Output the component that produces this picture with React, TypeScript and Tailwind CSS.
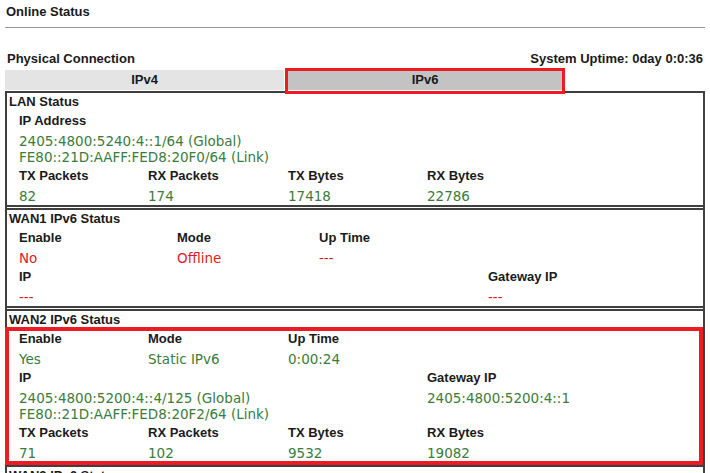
import React from "react"

const LABEL = "h-[20px] font-bold text-[13px] leading-[20px] text-[#1a1a1a]"
const VAL = "pt-[2px] pb-[1px] text-[13.5px] leading-[16px] font-['Verdana','DejaVu_Sans',sans-serif]"
const GREEN = "text-[#3b7b3b]"
const RED = "text-[#dd1c24]"

function Cell({ label, children, tone = GREEN }: { label?: string; children?: React.ReactNode; tone?: string }) {
  return (
    <div>
      {label ? <div className={LABEL}>{label}</div> : null}
      {children !== undefined ? <div className={`${VAL} ${tone}`}>{children}</div> : null}
    </div>
  )
}

function SectionTitle({ children }: { children: React.ReactNode }) {
  return <div className="pl-[2px] font-bold text-[13px] leading-[18px] text-[#1a1a1a]">{children}</div>
}

function Counters({ tx, rx, txb, rxb }: { tx: string; rx: string; txb: string; rxb: string }) {
  return (
    <div className="grid grid-cols-[129px_140px_139px_1fr]">
      <div className={LABEL}>TX Packets</div>
      <div className={LABEL}>RX Packets</div>
      <div className={LABEL}>TX Bytes</div>
      <div className={LABEL}>RX Bytes</div>
      <div className={`${VAL} ${GREEN}`}>{tx}</div>
      <div className={`${VAL} ${GREEN}`}>{rx}</div>
      <div className={`${VAL} ${GREEN}`}>{txb}</div>
      <div className={`${VAL} ${GREEN}`}>{rxb}</div>
    </div>
  )
}

export default function App() {
  return (
    <div className="w-[710px] bg-white px-[5px] font-['Liberation_Sans',Arial,sans-serif] text-[#1a1a1a]">
      <div className="h-[28px] border-b border-[#9a9a9a] pt-[4px] pl-[1px] font-bold text-[13px] leading-[16px]">
        Online Status
      </div>

      <div className="mt-[23px] flex h-[16px] items-center justify-between px-[2px] font-bold text-[13px] leading-[16px]">
        <span>Physical Connection</span>
        <span>System Uptime: 0day 0:0:36</span>
      </div>

      <div className="mt-[3px] flex gap-[3px]">
        <div className="flex h-[20px] w-[279px] items-center justify-center bg-[#e4e4e4] font-bold text-[13px]">IPv4</div>
        <div className="relative flex h-[20px] w-[276px] items-center justify-center bg-[#c3c3c3] font-bold text-[13px]">
          IPv6
          <div className="absolute -left-[2px] -right-[2px] -top-[2px] -bottom-[4px] border-[3px] border-[#ed1c24]" />
        </div>
      </div>

      <div className="mt-[1px] border-x-2 border-[#3f3f3f]">
        <section className="border-y-2 border-[#3f3f3f]">
          <SectionTitle>LAN Status</SectionTitle>
          <div className="pl-[12px]">
            <Cell label="IP Address">
              2405:4800:5240:4::1/64 (Global)
              <br />
              FE80::21D:AAFF:FED8:20F0/64 (Link)
            </Cell>
            <Counters tx="82" rx="174" txb="17418" rxb="22786" />
          </div>
        </section>

        <section className="mt-[1px] border-y-2 border-[#3f3f3f]">
          <SectionTitle>WAN1 IPv6 Status</SectionTitle>
          <div className="pl-[12px]">
            <div className="grid grid-cols-[158px_142px_1fr]">
              <Cell label="Enable" tone={RED}>No</Cell>
              <Cell label="Mode" tone={RED}>Offline</Cell>
              <Cell label="Up Time" tone={RED}>---</Cell>
            </div>
            <div className="grid grid-cols-[469px_1fr]">
              <Cell label="IP" tone={RED}>---</Cell>
              <Cell label="Gateway IP" tone={RED}>---</Cell>
            </div>
          </div>
        </section>

        <section className="relative mt-[1px] border-y-2 border-[#3f3f3f]">
          <SectionTitle>WAN2 IPv6 Status</SectionTitle>
          <div className="pl-[12px]">
            <div className="grid grid-cols-[129px_140px_1fr]">
              <Cell label="Enable">Yes</Cell>
              <Cell label="Mode">Static IPv6</Cell>
              <Cell label="Up Time">0:00:24</Cell>
            </div>
            <div className="grid grid-cols-[408px_1fr]">
              <Cell label="IP">
                2405:4800:5200:4::4/125 (Global)
                <br />
                FE80::21D:AAFF:FED8:20F2/64 (Link)
              </Cell>
              <Cell label="Gateway IP">2405:4800:5200:4::1</Cell>
            </div>
            <Counters tx="71" rx="102" txb="9532" rxb="19082" />
          </div>
          <div className="absolute -left-[2px] right-0 top-[16px] -bottom-[3px] border-4 border-[#ed1c24]" />
        </section>

        <section className="mt-[1px] border-y-2 border-[#3f3f3f]">
          <SectionTitle>WAN3 IPv6 Status</SectionTitle>
          <div className="h-[80px]" />
        </section>
      </div>
    </div>
  )
}
